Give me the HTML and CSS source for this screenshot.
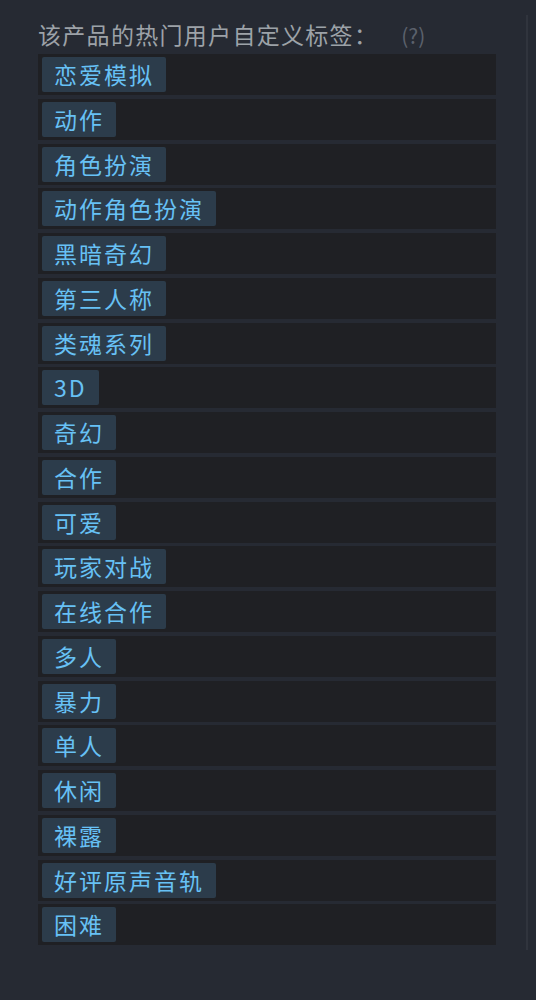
FILE: index.html
```html
<!DOCTYPE html>
<html lang="zh-CN">
<head>
    <meta charset="utf-8">
    <title>用户自定义标签</title>
    <link rel="stylesheet" href="styles.css">
</head>
<body>
    <div class="panel">
        <div class="tags-block">
            <div class="tags-title">该产品的热门用户自定义标签：<span class="help">(?)</span></div>
            <div class="tag-list">
                <div class="tag-row"><a class="tag">恋爱模拟</a></div>
                <div class="tag-row"><a class="tag">动作</a></div>
                <div class="tag-row"><a class="tag">角色扮演</a></div>
                <div class="tag-row"><a class="tag">动作角色扮演</a></div>
                <div class="tag-row"><a class="tag">黑暗奇幻</a></div>
                <div class="tag-row"><a class="tag">第三人称</a></div>
                <div class="tag-row"><a class="tag">类魂系列</a></div>
                <div class="tag-row"><a class="tag">3D</a></div>
                <div class="tag-row"><a class="tag">奇幻</a></div>
                <div class="tag-row"><a class="tag">合作</a></div>
                <div class="tag-row"><a class="tag">可爱</a></div>
                <div class="tag-row"><a class="tag">玩家对战</a></div>
                <div class="tag-row"><a class="tag">在线合作</a></div>
                <div class="tag-row"><a class="tag">多人</a></div>
                <div class="tag-row"><a class="tag">暴力</a></div>
                <div class="tag-row"><a class="tag">单人</a></div>
                <div class="tag-row"><a class="tag">休闲</a></div>
                <div class="tag-row"><a class="tag">裸露</a></div>
                <div class="tag-row"><a class="tag">好评原声音轨</a></div>
                <div class="tag-row"><a class="tag">困难</a></div>
            </div>
        </div>
    </div>
</body>
</html>
```

FILE: styles.css
```css
body {
    margin: 0;
    background-color: #262a33;
    font-family: "Noto Sans CJK SC", "Noto Sans", sans-serif;
}
.panel {
    width: 526px;
    border-right: 2px solid #30343d;
    margin-top: 15px;
    padding-bottom: 5px;
}
.tags-block {
    margin-left: 38px;
    width: 458px;
}
.tags-title {
    font-size: 23px;
    letter-spacing: 1.3px;
    line-height: 39px;
    height: 39px;
    color: #9da2a8;
    white-space: nowrap;
}
.help {
    color: #5b616c;
    font-size: 21px;
    margin-left: 23px;
    letter-spacing: 0;
}
.tag-list {
    display: flex;
    flex-direction: column;
    gap: 3.75px;
}
.tag-row {
    height: 41px;
    box-sizing: border-box;
    padding: 3px 4px;
    background-color: #1f2024;
    display: flex;
    align-items: flex-start;
}
.tag {
    display: block;
    height: 35px;
    line-height: 35px;
    padding: 0 12px 0 12px;
    font-size: 23px;
    letter-spacing: 2px;
    color: #67c1f5;
    background-color: #2c3c4b;
    border-radius: 2px;
    white-space: nowrap;
}
```
